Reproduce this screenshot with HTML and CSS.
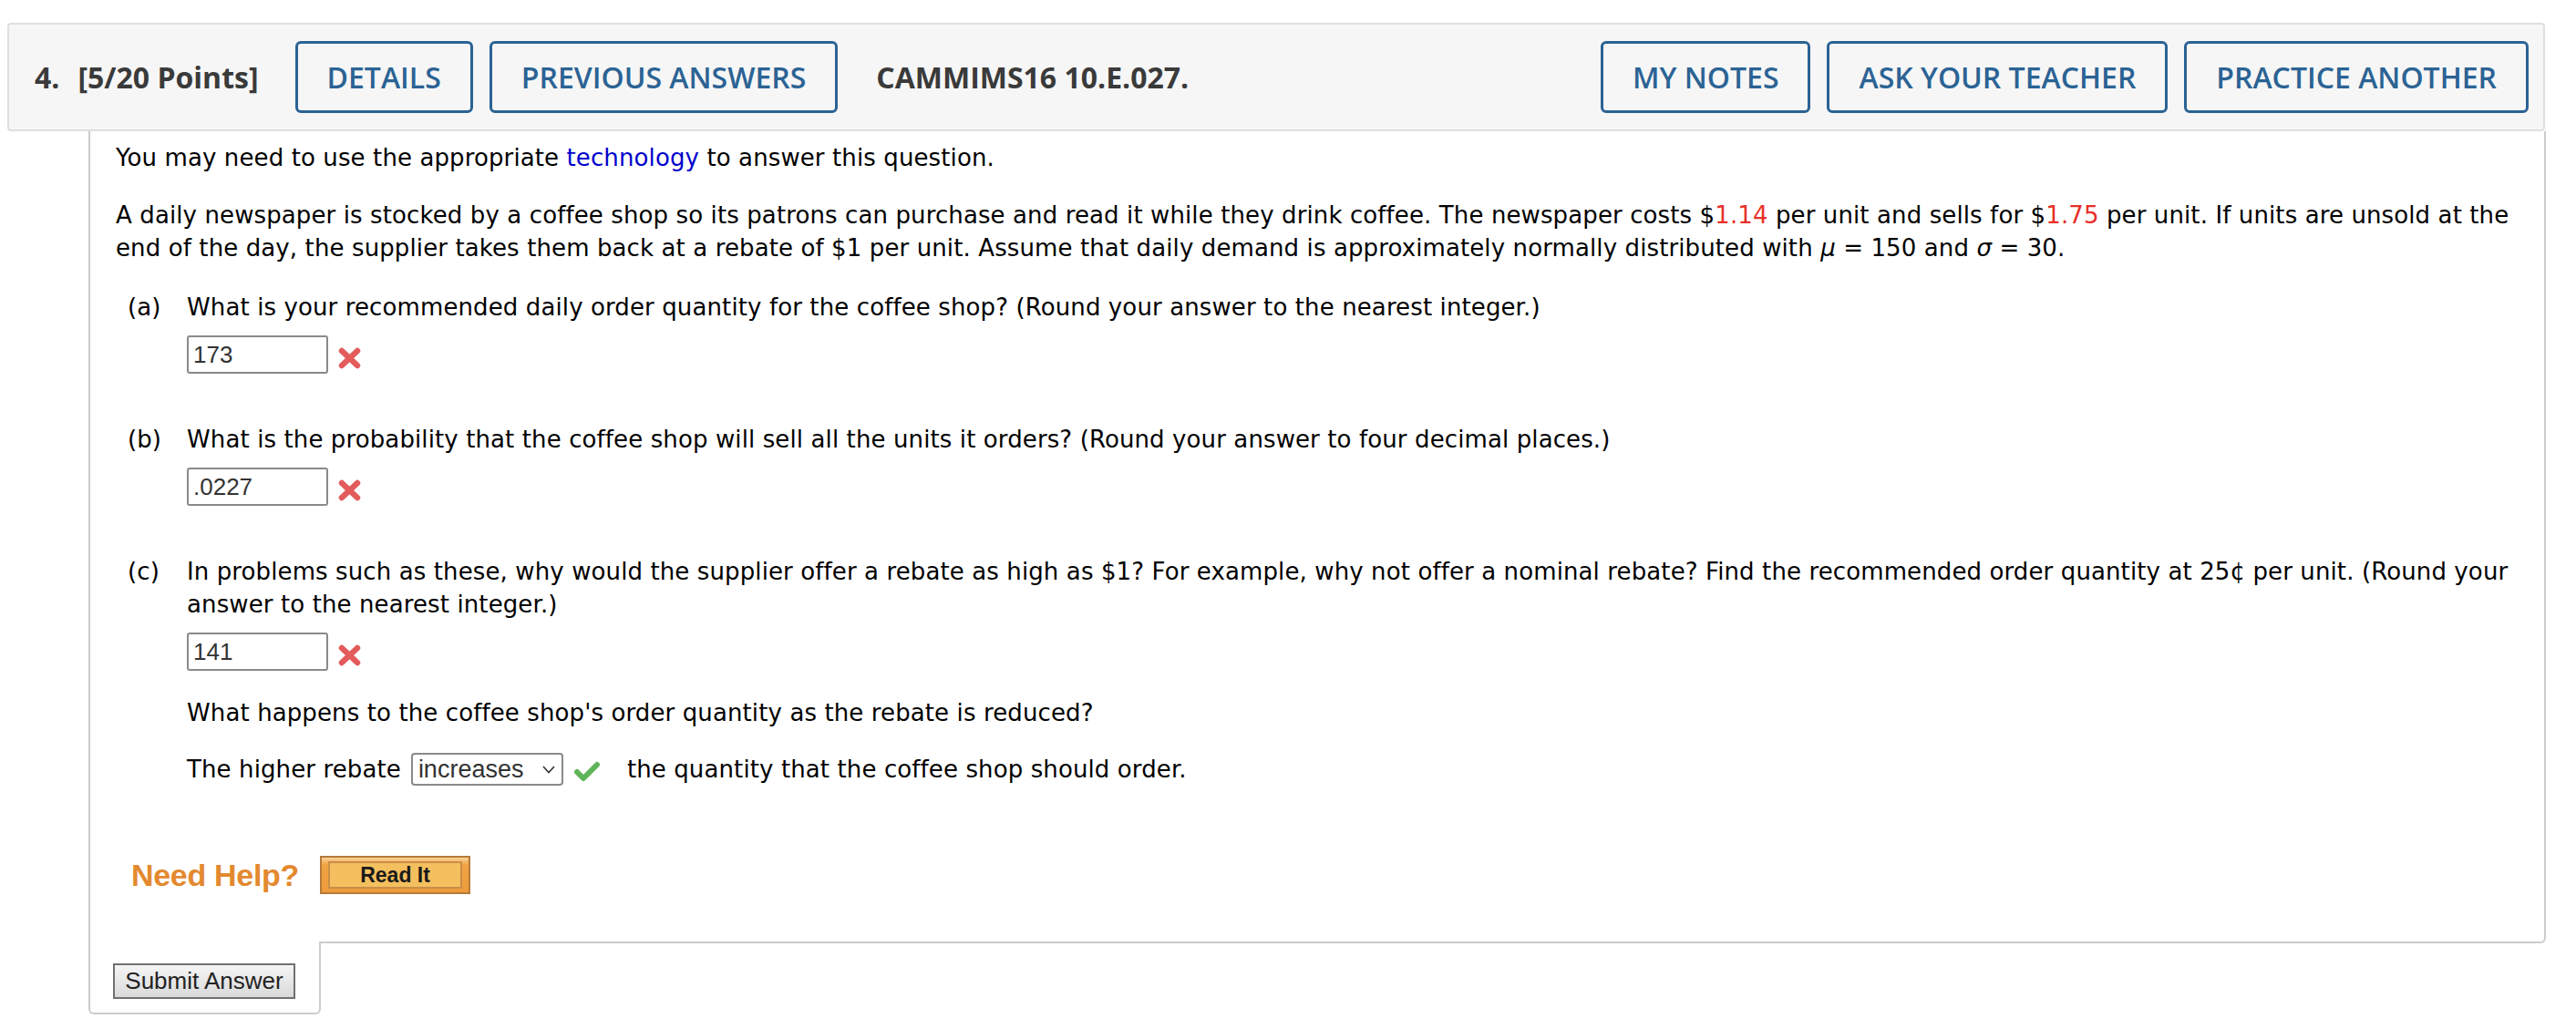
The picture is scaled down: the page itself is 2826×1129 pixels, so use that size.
FILE: index.html
```html
<!DOCTYPE html>
<html lang="en">
<head>
<meta charset="utf-8">
<title>Question 4</title>
<link rel="stylesheet" href="styles.css">
</head>
<body>
<div class="page">
  <div class="qhead">
    <span class="qnum">4.</span>
    <span class="qpts">[5/20 Points]</span>
    <button class="hbtn">DETAILS</button>
    <button class="hbtn">PREVIOUS ANSWERS</button>
    <span class="qcode">CAMMIMS16 10.E.027.</span>
    <span class="spacer"></span>
    <button class="hbtn">MY NOTES</button>
    <button class="hbtn">ASK YOUR TEACHER</button>
    <button class="hbtn last">PRACTICE ANOTHER</button>
  </div>

  <div class="qbody">
    <p class="intro">You may need to use the appropriate <a class="tech" href="#">technology</a> to answer this question.</p>
    <p class="stem">A daily newspaper is stocked by a coffee shop so its patrons can purchase and read it while they drink coffee. The newspaper costs $<span class="red">1.14</span> per unit and sells for $<span class="red">1.75</span> per unit. If units are unsold at the end of the day, the supplier takes them back at a rebate of $1 per unit. Assume that daily demand is approximately normally distributed with <i>&mu;</i> = 150 and <i>&sigma;</i> = 30.</p>

    <div class="part">
      <span class="plabel">(a)</span>
      <div class="pcontent">
        <div class="ptext">What is your recommended daily order quantity for the coffee shop? (Round your answer to the nearest integer.)</div>
        <div class="ansrow">
          <input class="ans" type="text" value="173" readonly>
          <svg class="xicon" viewBox="0 0 27 24" width="27" height="24"><path d="M5 4 L22 20 M22 4 L5 20" stroke="#e35b5b" stroke-width="6.5" stroke-linecap="round" fill="none"/></svg>
        </div>
      </div>
    </div>

    <div class="part">
      <span class="plabel">(b)</span>
      <div class="pcontent">
        <div class="ptext">What is the probability that the coffee shop will sell all the units it orders? (Round your answer to four decimal places.)</div>
        <div class="ansrow">
          <input class="ans" type="text" value=".0227" readonly>
          <svg class="xicon" viewBox="0 0 27 24" width="27" height="24"><path d="M5 4 L22 20 M22 4 L5 20" stroke="#e35b5b" stroke-width="6.5" stroke-linecap="round" fill="none"/></svg>
        </div>
      </div>
    </div>

    <div class="part">
      <span class="plabel">(c)</span>
      <div class="pcontent">
        <div class="ptext">In problems such as these, why would the supplier offer a rebate as high as $1? For example, why not offer a nominal rebate? Find the recommended order quantity at 25&cent; per unit. (Round your answer to the nearest integer.)</div>
        <div class="ansrow">
          <input class="ans" type="text" value="141" readonly>
          <svg class="xicon" viewBox="0 0 27 24" width="27" height="24"><path d="M5 4 L22 20 M22 4 L5 20" stroke="#e35b5b" stroke-width="6.5" stroke-linecap="round" fill="none"/></svg>
        </div>
        <div class="ptext follow">What happens to the coffee shop's order quantity as the rebate is reduced?</div>
        <div class="selrow">
          <span>The higher rebate</span>
          <span class="selwrap">
            <select class="sel"><option>increases</option><option>decreases</option></select>
            <svg class="chev" viewBox="0 0 14 9" width="14" height="9"><path d="M1 1 L7 7.5 L13 1" stroke="#333" stroke-width="1.6" fill="none"/></svg>
          </span>
          <svg class="check" viewBox="0 0 30 24" width="30" height="24"><path d="M4 13 L11 20 L26 5" stroke="#5fb45a" stroke-width="6" stroke-linecap="round" stroke-linejoin="round" fill="none"/></svg>
          <span>the quantity that the coffee shop should order.</span>
        </div>
      </div>
    </div>

    <div class="help">
      <span class="needhelp">Need Help?</span>
      <button class="readit"><span class="readit-inner">Read It</span></button>
    </div>
  </div>

  <div class="submit-tab">
    <button class="submit-btn">Submit Answer</button>
  </div>
</div>
</body>
</html>
```

FILE: styles.css
```css
* { box-sizing: border-box; }
html, body { margin: 0; padding: 0; background: #fff; }

.page { padding: 25px 34px 16px 8px; }

/* header */
.qhead {
  display: flex;
  align-items: center;
  height: 119px;
  background: #f6f6f6;
  border: 2px solid #dfdfdf;
  border-radius: 4px;
  padding: 0 16px 0 28px;
  font-family: "Open Sans", sans-serif;
  font-size: 32px;
  color: #3a3a3a;
}
.qnum { font-weight: 700; margin-right: 20px; }
.qpts { font-weight: 700; margin-right: 40px; }
.qcode { font-weight: 700; margin-left: 24px; }
.spacer { flex: 1; }
.hbtn {
  font-family: "Open Sans", sans-serif;
  font-size: 32px;
  font-weight: 600;
  color: #2b6394;
  background: transparent;
  border: 3px solid #2b6394;
  border-radius: 6px;
  height: 79px;
  padding: 0 32px;
  margin-right: 18px;
  white-space: nowrap;
}
.hbtn.last { margin-right: 0; }

/* body */
.qbody {
  margin-left: 89px;
  margin-right: -1px;
  border: 2px solid #cccccc;
  border-top: none;
  border-radius: 0 0 6px 0;
  padding: 11px 20px 52px 28px;
  font-family: "DejaVu Sans", Verdana, sans-serif;
  font-size: 26px;
  line-height: 36px;
  letter-spacing: 0.11px;
  color: #000;
}
.intro { margin: 0 0 27px; }
.stem { margin: 0 0 29px; }
.tech { color: #0000cc; text-decoration: none; }
.red { color: #e8302a; }

.part { display: flex; margin: 0 0 54px 13px; }
.plabel { width: 65px; flex: none; }
.pcontent { flex: 1; }
.ansrow { display: flex; align-items: center; margin-top: 13px; height: 42px; }
.ans {
  width: 155px;
  height: 42px;
  border: 2px solid #8a8a8a;
  border-radius: 3px;
  font-family: "Liberation Sans", Arial, sans-serif;
  font-size: 26px;
  letter-spacing: 0;
  color: #333;
  padding: 0 5px;
  background: #fff;
  outline: none;
}
.xicon { margin-left: 10px; margin-top: 8px; }

.follow { margin-top: 28px; }
.selrow { display: flex; align-items: center; height: 36px; margin-top: 26px; white-space: nowrap; }
.selwrap { position: relative; display: inline-block; margin-left: 11px; }
.sel {
  -webkit-appearance: none;
  appearance: none;
  width: 167px;
  height: 36px;
  border: 2px solid #8a8a8a;
  border-radius: 4px;
  background: #fff;
  font-family: "Liberation Sans", Arial, sans-serif;
  font-size: 27px;
  letter-spacing: 0;
  color: #333;
  padding: 0 0 0 6px;
}
.chev { position: absolute; right: 9px; top: 14px; pointer-events: none; }
.check { margin-left: 11px; margin-right: 29px; margin-top: 4px; }

.help { display: flex; align-items: center; margin: 77px 0 0 17px; height: 42px; }
.needhelp {
  font-family: "Liberation Sans", Arial, sans-serif;
  font-weight: 700;
  font-size: 34px;
  letter-spacing: -0.3px;
  color: #e3892f;
  margin-right: 23px;
}
.readit {
  width: 165px;
  height: 42px;
  padding: 4px 7px;
  border: 2px solid #b57b3a;
  background: linear-gradient(#f8d49a 0%, #f0a445 20%, #ee9b3a 100%);
  display: flex;
}
.readit-inner {
  flex: 1;
  display: flex;
  align-items: center;
  justify-content: center;
  border: 2px solid #c98e48;
  background: #f4bf5e;
  font-family: "Liberation Sans", Arial, sans-serif;
  font-weight: 700;
  font-size: 23px;
  letter-spacing: 0;
  color: #1a1a1a;
}

/* submit tab */
.submit-tab {
  position: relative;
  margin-left: 89px;
  margin-top: -2px;
  width: 255px;
  border: 2px solid #cccccc;
  border-top: none;
  border-radius: 0 0 6px 6px;
  background: #fff;
  padding: 24px 0 15px 25px;
}
.submit-btn {
  display: block;
  width: 200px;
  height: 39px;
  padding: 0;
  border: 2px solid #707070;
  background: linear-gradient(#f5f5f5, #d9d9d9);
  font-family: "Liberation Sans", Arial, sans-serif;
  font-size: 26px;
  color: #222;
}
```
